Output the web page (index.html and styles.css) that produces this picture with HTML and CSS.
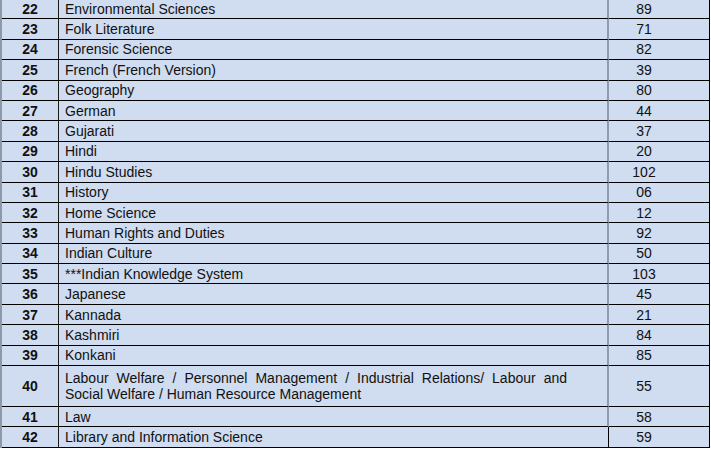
FILE: index.html
```html
<!DOCTYPE html>
<html lang="en">
<head>
<meta charset="utf-8">
<title>Subjects</title>
<link rel="stylesheet" href="styles.css">
</head>
<body>
<table class="subjects">
  <colgroup>
    <col class="c-num">
    <col class="c-sub">
    <col class="c-code">
  </colgroup>
  <tbody>
    <tr><td class="num">22</td><td class="sub">Environmental Sciences</td><td class="code">89</td></tr>
    <tr><td class="num">23</td><td class="sub">Folk Literature</td><td class="code">71</td></tr>
    <tr><td class="num">24</td><td class="sub">Forensic Science</td><td class="code">82</td></tr>
    <tr><td class="num">25</td><td class="sub">French (French Version)</td><td class="code">39</td></tr>
    <tr><td class="num">26</td><td class="sub">Geography</td><td class="code">80</td></tr>
    <tr><td class="num">27</td><td class="sub">German</td><td class="code">44</td></tr>
    <tr><td class="num">28</td><td class="sub">Gujarati</td><td class="code">37</td></tr>
    <tr><td class="num">29</td><td class="sub">Hindi</td><td class="code">20</td></tr>
    <tr><td class="num">30</td><td class="sub">Hindu Studies</td><td class="code">102</td></tr>
    <tr><td class="num">31</td><td class="sub">History</td><td class="code">06</td></tr>
    <tr><td class="num">32</td><td class="sub">Home Science</td><td class="code">12</td></tr>
    <tr><td class="num">33</td><td class="sub">Human Rights and Duties</td><td class="code">92</td></tr>
    <tr><td class="num">34</td><td class="sub">Indian Culture</td><td class="code">50</td></tr>
    <tr><td class="num">35</td><td class="sub">***Indian Knowledge System</td><td class="code">103</td></tr>
    <tr><td class="num">36</td><td class="sub">Japanese</td><td class="code">45</td></tr>
    <tr><td class="num">37</td><td class="sub">Kannada</td><td class="code">21</td></tr>
    <tr><td class="num">38</td><td class="sub">Kashmiri</td><td class="code">84</td></tr>
    <tr><td class="num">39</td><td class="sub">Konkani</td><td class="code">85</td></tr>
    <tr class="tall"><td class="num">40</td><td class="sub">Labour Welfare / Personnel Management / Industrial Relations/ Labour and Social Welfare / Human Resource Management</td><td class="code">55</td></tr>
    <tr><td class="num">41</td><td class="sub">Law</td><td class="code">58</td></tr>
    <tr class="last"><td class="num">42</td><td class="sub">Library and Information Science</td><td class="code">59</td></tr>
  </tbody>
</table>
</body>
</html>
```
FILE: styles.css
```css
html, body {
  margin: 0;
  padding: 0;
  background: #ffffff;
}

.subjects {
  margin-top: -1px;
  width: 710px;
  table-layout: fixed;
  border-collapse: separate;
  border-spacing: 0;
  border-left: 2px solid #8e99a8;
  background: #d0dcef;
  font-family: "Liberation Sans", Arial, sans-serif;
  font-size: 14px;
  color: #111111;
}

.c-num { width: 57px; }
.c-sub { width: 550px; }
.c-code { width: 101px; }

.subjects tr {
  height: 20.4px;
}

.subjects tr.tall {
  height: 41px;
}

.subjects td {
  padding: 0;
  line-height: 16px;
  vertical-align: middle;
  border-bottom: 1px solid #000000;
}

.subjects .num {
  text-align: center;
  font-weight: bold;
  border-right: 1px solid #1a1a1a;
}

.subjects .sub {
  padding-left: 6px;
  padding-right: 40px;
  text-align: justify;
  border-right: 2px solid #8d9ab0;
}

.subjects .code {
  text-align: center;
  padding-right: 30px;
  border-right: 1px solid #000000;
}

.subjects tr.last .sub {
  border-right: 1px solid #000000;
  padding-right: 41px;
}
```
